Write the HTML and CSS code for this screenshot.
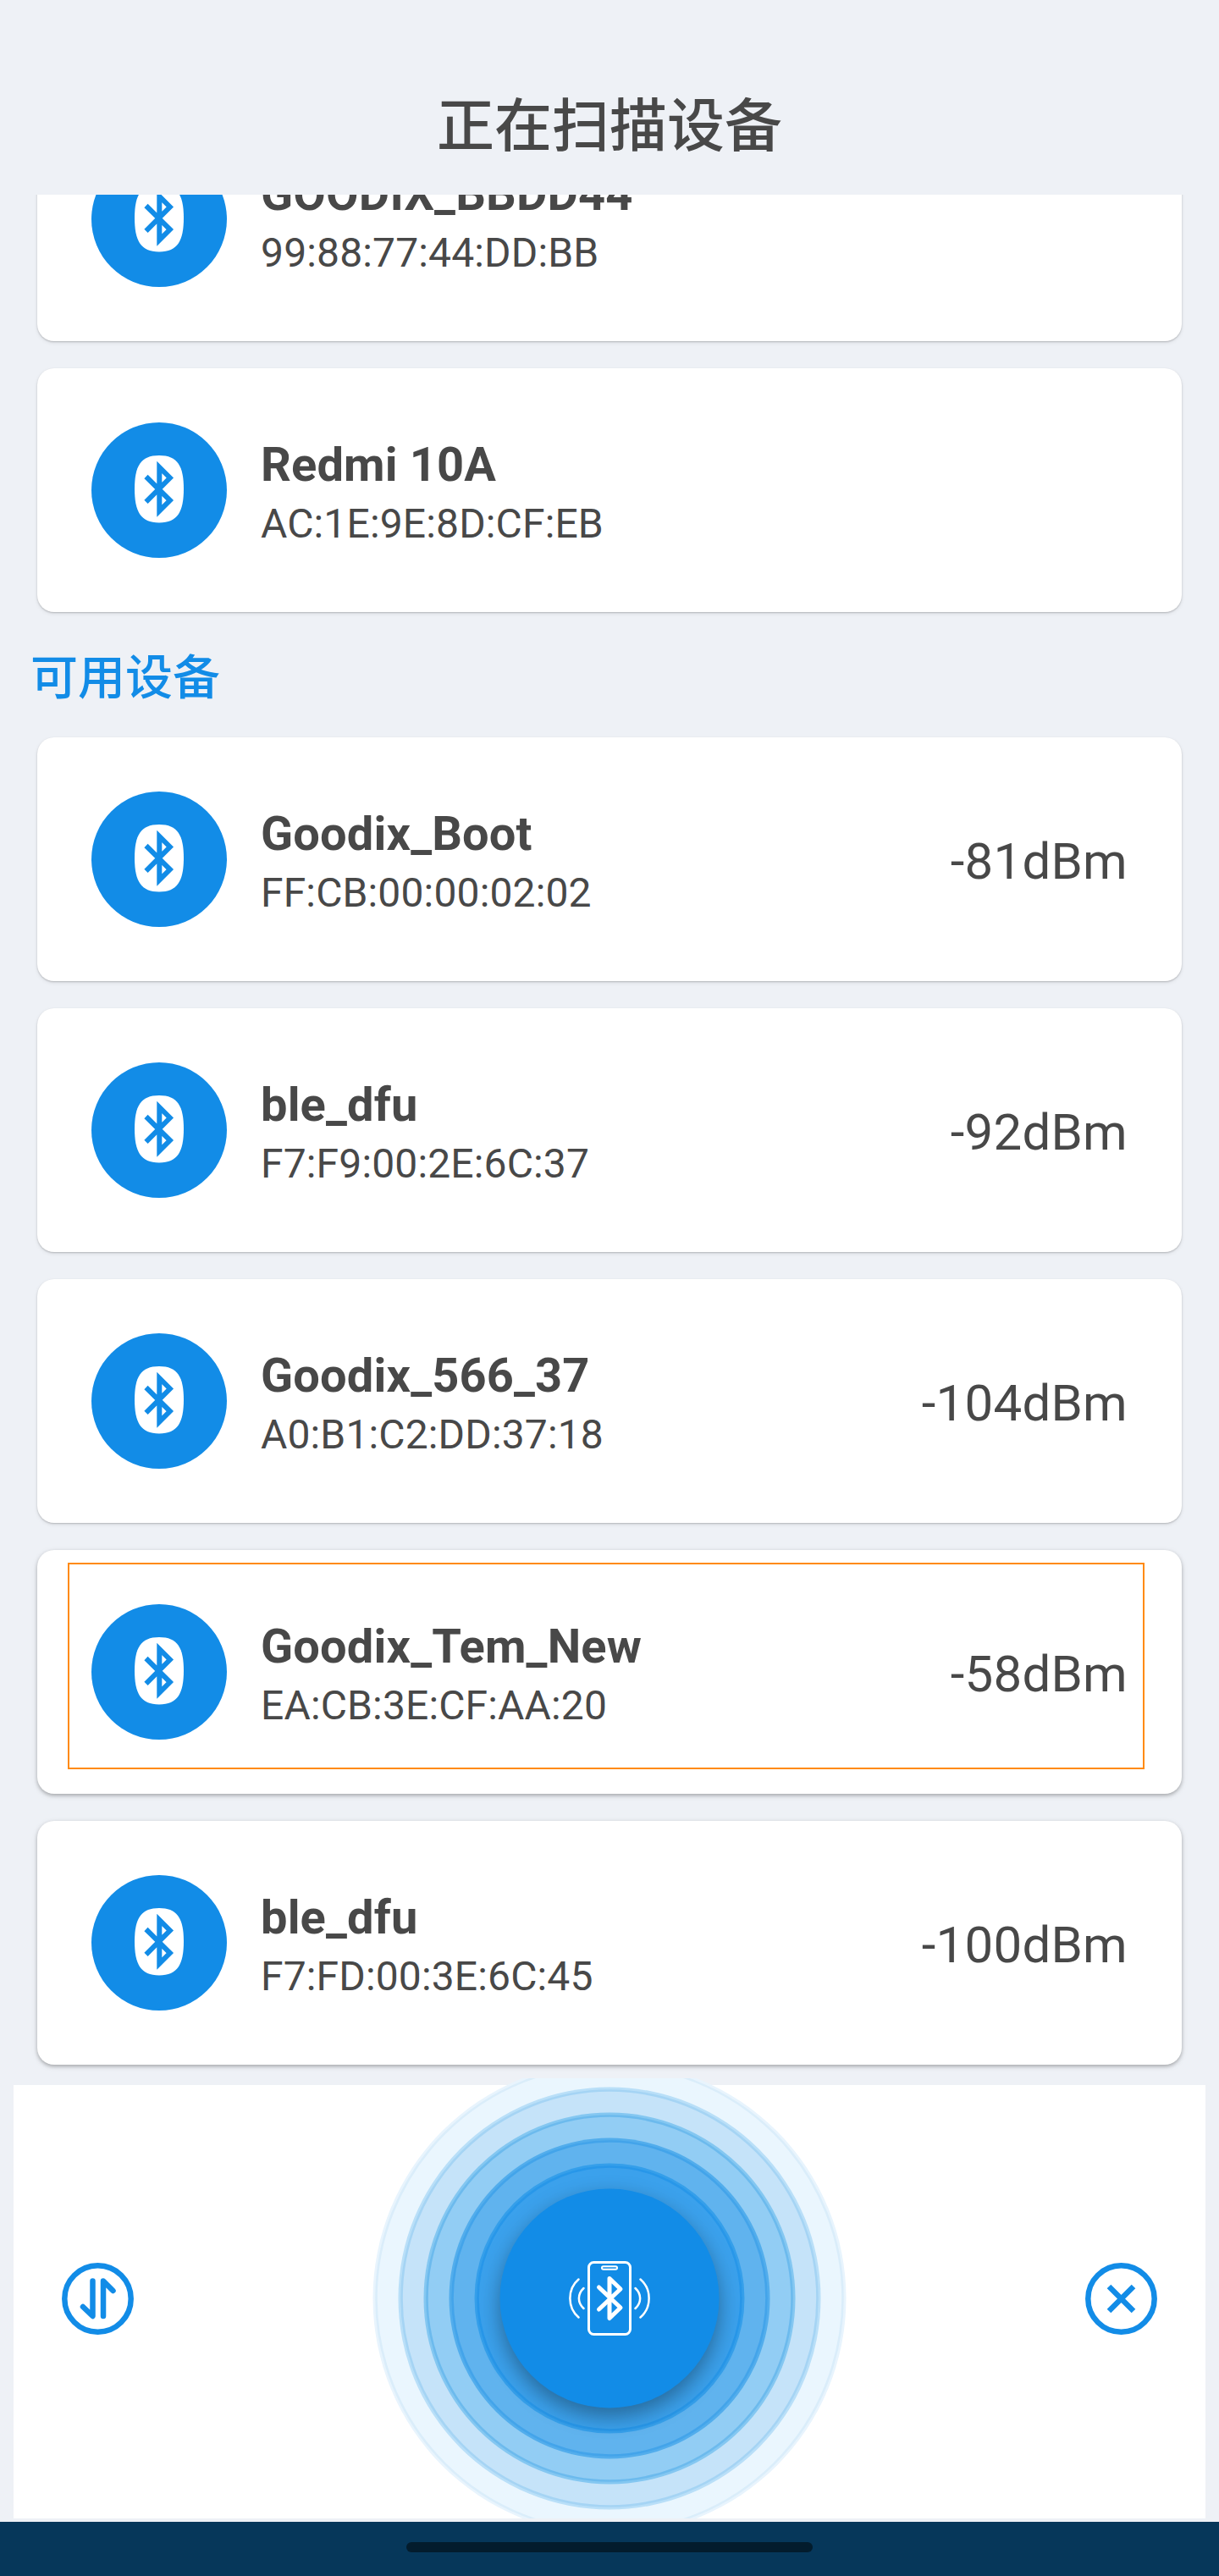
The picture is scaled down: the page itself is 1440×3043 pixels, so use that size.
FILE: index.html
```html
<!DOCTYPE html>
<html lang="zh-CN">
<head>
<meta charset="utf-8">
<title>正在扫描设备</title>
<link rel="stylesheet" href="styles.css">
</head>
<body>
<svg class="defs" aria-hidden="true">
  <symbol id="bt" viewBox="0 0 160 160">
    <path class="bt-body" d="M80 39C102 39 109 52 109 78.500S102 118.500 80 118.500S51 105 51 78.500S58 39 80 39Z"/>
    <path class="bt-rune" d="M64.500 64L92.800 92L80.300 104.500V53L92.800 65.500L64.500 93.800"/>
  </symbol>
</svg>
<div class="screen">
  <header class="header"><h1 class="title">正在扫描设备</h1></header>
  <main class="list">
    <article class="card card-cut">
      <svg class="avatar"><use href="#bt"/></svg>
      <div class="info"><div class="name">GOODIX_BBDD44</div><div class="addr">99:88:77:44:DD:BB</div></div>
    </article>
    <article class="card">
      <svg class="avatar"><use href="#bt"/></svg>
      <div class="info"><div class="name">Redmi 10A</div><div class="addr">AC:1E:9E:8D:CF:EB</div></div>
    </article>
    <h2 class="section">可用设备</h2>
    <article class="card">
      <svg class="avatar"><use href="#bt"/></svg>
      <div class="info"><div class="name">Goodix_Boot</div><div class="addr">FF:CB:00:00:02:02</div></div>
      <div class="rssi">-81dBm</div>
    </article>
    <article class="card">
      <svg class="avatar"><use href="#bt"/></svg>
      <div class="info"><div class="name">ble_dfu</div><div class="addr">F7:F9:00:2E:6C:37</div></div>
      <div class="rssi">-92dBm</div>
    </article>
    <article class="card">
      <svg class="avatar"><use href="#bt"/></svg>
      <div class="info"><div class="name">Goodix_566_37</div><div class="addr">A0:B1:C2:DD:37:18</div></div>
      <div class="rssi">-104dBm</div>
    </article>
    <article class="card card-low card-marked">
      <svg class="avatar"><use href="#bt"/></svg>
      <div class="info"><div class="name">Goodix_Tem_New</div><div class="addr">EA:CB:3E:CF:AA:20</div></div>
      <div class="rssi">-58dBm</div>
    </article>
    <article class="card card-low">
      <svg class="avatar"><use href="#bt"/></svg>
      <div class="info"><div class="name">ble_dfu</div><div class="addr">F7:FD:00:3E:6C:45</div></div>
      <div class="rssi">-100dBm</div>
    </article>
  </main>
  <footer class="panel">
    <svg class="action" viewBox="0 0 85 85">
      <circle cx="42.500" cy="42.500" r="39.200"/>
      <path class="round" d="M25 52L36.500 63V21.500M49 63V21.500L60.500 33"/>
    </svg>
    <svg class="radar" viewBox="0 0 560 520">
      <g class="r1"><circle cx="280" cy="260" r="279.500"/><circle class="edge" cx="280" cy="260" r="275.500"/></g>
      <g class="r2"><circle cx="280" cy="260" r="249.500"/><circle class="edge" cx="280" cy="260" r="245.500"/></g>
      <g class="r3"><circle cx="280" cy="260" r="219.500"/><circle class="edge" cx="280" cy="260" r="215.500"/></g>
      <g class="r4"><circle cx="280" cy="260" r="189.500"/><circle class="edge" cx="280" cy="260" r="185.500"/></g>
      <g class="r5"><circle cx="280" cy="260" r="159.500"/><circle class="edge" cx="280" cy="260" r="155.500"/></g>
      <circle class="hub" cx="280" cy="260" r="129.500"/>
      <g class="phone">
        <rect x="255.500" y="217.500" width="49" height="85" rx="6"/>
        <rect class="thin" x="271" y="222.200" width="18" height="3.600" rx="1.800"/>
        <path class="wave" d="M243.500 237.500C230 249 230 271 243.500 282.500M249.500 248C242 255 242 265 249.500 272M316.500 237.500C330 249 330 271 316.500 282.500M310.500 248C318 255 318 265 310.500 272"/>
        <path class="rune" d="M267.500 247L293 271L280 283.500V236.500L293 249L267.500 273"/>
      </g>
    </svg>
    <svg class="action" viewBox="0 0 85 85">
      <circle cx="42.500" cy="42.500" r="39.200"/>
      <path d="M28 28L57 57M57 28L28 57"/>
    </svg>
  </footer>
  <nav class="navbar"><span class="handle"></span></nav>
</div>
</body>
</html>
```
FILE: styles.css
```css
*, *::before, *::after { box-sizing: border-box; }
body {
  margin: 0;
  background: #eef1f6;
  color: #484848;
  font-family: Roboto, "Noto Sans CJK SC", sans-serif;
}
.defs { display: none; }
.screen { display: flex; flex-direction: column; width: 1440px; height: 3043px; overflow: hidden; }
.header { flex: none; height: 230px; display: flex; justify-content: center; padding-top: 100px; }
.title { margin: 0; font-size: 68px; line-height: 100px; font-weight: 500; }
.list {
  flex: none;
  height: 2233px;
  padding: 0 44px;
  display: flex;
  flex-direction: column;
  gap: 32px;
  overflow: hidden;
}
.card {
  flex: none;
  height: 288px;
  padding: 64px 64px 0;
  display: flex;
  background: #fff;
  border-radius: 20px;
  box-shadow: 0 1px 2px rgba(0, 0, 0, .2), 0 2px 5px rgba(0, 0, 0, .08);
}
.card-cut { margin-top: -115px; }
.card-low { box-shadow: 0 2px 4px rgba(0, 0, 0, .26), 0 2px 8px rgba(0, 0, 0, .08); }
.card-marked { position: relative; }
.card-marked::after {
  content: "";
  position: absolute;
  left: 36px;
  top: 15px;
  width: 1272px;
  height: 244px;
  border: 2px solid #ff8a0c;
}
.avatar { flex: none; width: 160px; height: 160px; border-radius: 50%; background: #128ce7; }
.bt-body { fill: #fff; }
.bt-rune { fill: none; stroke: #128ce7; stroke-width: 6; stroke-miterlimit: 6; }
.info { flex: 1; margin-left: 40px; padding-top: 17px; }
.name { font-size: 56px; line-height: 66px; font-weight: 700; letter-spacing: .15px; }
.addr { font-size: 48px; line-height: 56px; margin-top: 9px; letter-spacing: .15px; }
.rssi { font-size: 60px; line-height: 70px; padding-top: 48px; letter-spacing: .25px; }
.section {
  flex: none;
  margin: 0 0 0 -8px;
  height: 84px;
  line-height: 92px;
  font-size: 56px;
  font-weight: 500;
  color: #128ce7;
}
.panel {
  flex: none;
  height: 512px;
  margin: 0 16px 4px;
  padding: 0 57px;
  display: flex;
  align-items: center;
  justify-content: space-between;
  background: #fff;
}
.action { width: 85px; height: 85px; margin-top: -8px; fill: none; stroke: #128ce7; stroke-width: 6.500px; }
.round { stroke-linecap: round; stroke-linejoin: round; }
.radar { width: 560px; height: 520px; margin-top: -8px; overflow: hidden; }
.r1 { fill: #e8f4fd; }
.r2 { fill: #b9dff8; }
.r3 { fill: #84c7f1; }
.r4 { fill: #52adec; }
.r5 { fill: #359fea; }
.edge { stroke-width: 2.600px; }
.r1 .edge { fill: #eaf6fe; stroke: #daedfa; }
.r2 .edge { fill: #c5e3f9; stroke: #a5d4f4; }
.r3 .edge { fill: #92cdf4; stroke: #6cbaed; }
.r4 .edge { fill: #60b3ee; stroke: #43a4ea; }
.r5 .edge { fill: #3ba1ec; stroke: #2897e9; }
.hub { fill: #128ce7; filter: drop-shadow(0 10px 12px rgba(0, 0, 0, .35)); }
.phone { fill: none; stroke: #fff; stroke-width: 3; }
.wave, .rune { stroke-linecap: round; stroke-linejoin: round; }
.wave { stroke-width: 2.500px; }
.thin { stroke-width: 2; }
.rune { stroke-width: 5; }
.navbar { flex: none; height: 64px; padding-top: 24px; background: #06375a; }
.handle { display: block; width: 480px; height: 12px; margin: 0 auto; border-radius: 6px; background: #031c2d; }
```
